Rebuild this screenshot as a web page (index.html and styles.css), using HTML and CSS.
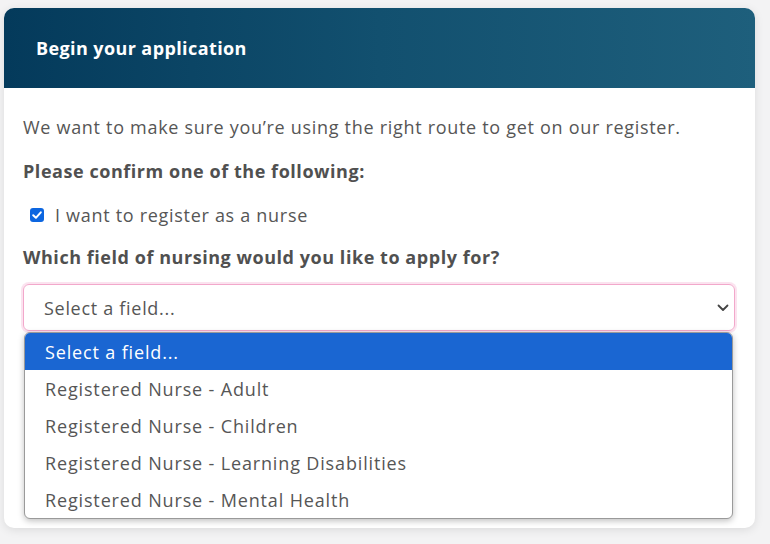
FILE: index.html
```html
<!DOCTYPE html>
<html lang="en">
<head>
<meta charset="utf-8">
<title>Begin your application</title>
<link rel="stylesheet" href="styles.css">
</head>
<body>
<div class="card">
  <div class="card-header">
    <h2 class="card-title">Begin your application</h2>
  </div>
  <div class="card-body">
    <p class="intro">We want to make sure you’re using the right route to get on our register.</p>
    <p class="label">Please confirm one of the following:</p>
    <label class="check">
      <span class="box">
        <svg viewBox="0 0 14 14" width="14" height="14"><path d="M3.2 7.2 L5.9 9.8 L10.8 4.3" fill="none" stroke="#fff" stroke-width="2" stroke-linecap="round" stroke-linejoin="round"/></svg>
      </span>
      <span class="check-text">I want to register as a nurse</span>
    </label>
    <p class="label">Which field of nursing would you like to apply for?</p>
    <div class="select-wrap">
      <div class="select">
        <span class="select-text">Select a field...</span>
        <svg class="chev" viewBox="0 0 12 8" width="12" height="8"><path d="M1.5 1.5 L6 6 L10.5 1.5" fill="none" stroke="#444" stroke-width="1.8" stroke-linecap="round" stroke-linejoin="round"/></svg>
      </div>
      <ul class="options">
        <li class="option selected">Select a field...</li>
        <li class="option">Registered Nurse - Adult</li>
        <li class="option">Registered Nurse - Children</li>
        <li class="option">Registered Nurse - Learning Disabilities</li>
        <li class="option">Registered Nurse - Mental Health</li>
      </ul>
    </div>
  </div>
</div>
</body>
</html>
```

FILE: styles.css
```css
html, body {
  margin: 0;
  padding: 0;
}
body {
  background: #f3f3f4;
  font-family: "Open Sans", "Noto Sans", sans-serif;
  color: #565656;
  width: 770px;
  height: 544px;
  overflow: hidden;
  letter-spacing: 0.7px;
}
.card {
  margin: 8px 15px 0 4px;
  height: 520px;
  background: #fff;
  border-radius: 10px;
  box-shadow: 0 2px 10px rgba(0,0,0,0.10);
}
.card-header {
  height: 80px;
  border-radius: 10px 10px 0 0;
  background: linear-gradient(90deg, #043a5b 0%, #12506f 50%, #1e5f7c 100%);
  display: flex;
  align-items: center;
  padding-left: 32px;
}
.card-title {
  margin: 0 0 1px;
  color: #fff;
  font-size: 18px;
  font-weight: 700;
  letter-spacing: 0.4px;
}
.card-body {
  padding: 26px 20px 0 19px;
}
.intro {
  margin: 0 0 18px;
  font-size: 18px;
  line-height: 26px;
}
.label {
  margin: 0;
  font-size: 18px;
  font-weight: 700;
  line-height: 26px;
  color: #505050;
  letter-spacing: 0.55px;
}
.check {
  display: flex;
  align-items: center;
  gap: 11px;
  margin: 18px 0 16px 7px;
  font-size: 18px;
  line-height: 26px;
}
.box {
  width: 14px;
  height: 14px;
  border-radius: 3px;
  background: #0d66e0;
  display: flex;
}
.select-wrap {
  position: relative;
  margin-top: 14px;
}
.select {
  height: 47px;
  box-sizing: border-box;
  border: 1px solid #f2a8cb;
  box-shadow: 0 0 0 2px rgba(244, 176, 210, 0.35);
  border-radius: 6px;
  display: flex;
  align-items: center;
  justify-content: space-between;
  padding: 0 5px 0 20px;
  font-size: 18px;
}
.options {
  position: absolute;
  top: 48px;
  left: 1px;
  right: 2px;
  margin: 0;
  padding: 0;
  list-style: none;
  background: #fff;
  border: 1px solid #9a9a9a;
  border-radius: 6px;
  box-shadow: 0 2px 6px rgba(0,0,0,0.25);
  overflow: hidden;
}
.option {
  height: 37px;
  line-height: 38px;
  padding-left: 20px;
  font-size: 18px;
  color: #565656;
  letter-spacing: 0.85px;
}
.option.selected {
  background: #1a66d2;
  color: #fff;
}
```
